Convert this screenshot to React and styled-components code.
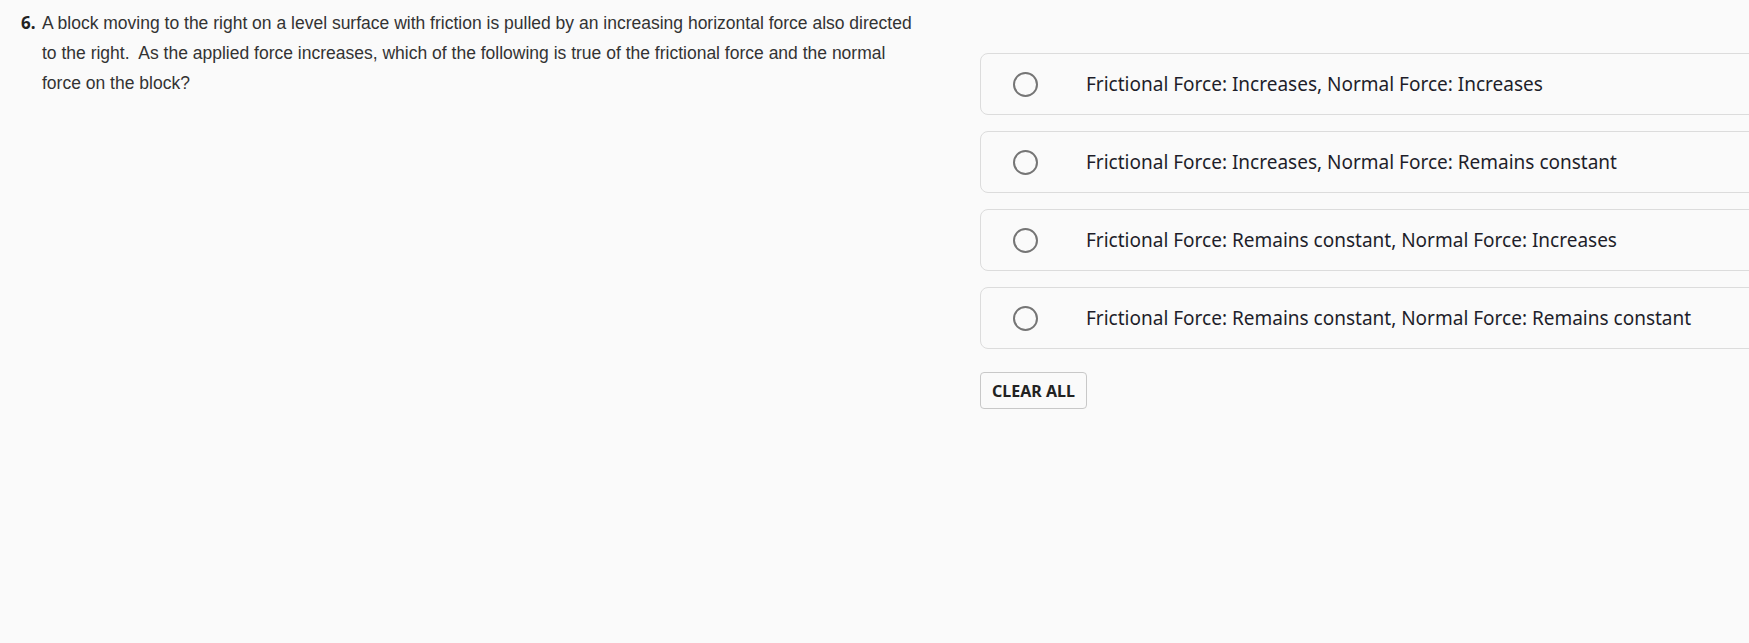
import React from "react";
import styled, { createGlobalStyle } from "styled-components";

const GlobalStyle = createGlobalStyle`
  html, body {
    margin: 0;
    padding: 0;
    background: #fafafa;
    overflow: hidden;
  }
`;

const options = [
  "Frictional Force: Increases, Normal Force: Increases",
  "Frictional Force: Increases, Normal Force: Remains constant",
  "Frictional Force: Remains constant, Normal Force: Increases",
  "Frictional Force: Remains constant, Normal Force: Remains constant",
];

const App = () => {
  return (
    <>
      <GlobalStyle />
      <Page>
        <Question>
          <Number>6.</Number>
          <Prompt>
            A block moving to the right on a level surface with friction is pulled by an
            increasing horizontal force also directed to the right.&nbsp; As the applied force
            increases, which of the following is true of the frictional force and the normal
            force on the block?
          </Prompt>
        </Question>
        <Answers>
          {options.map((text) => (
            <Choice key={text}>
              <Radio />
              <ChoiceText>{text}</ChoiceText>
            </Choice>
          ))}
          <ClearButton>CLEAR ALL</ClearButton>
        </Answers>
      </Page>
    </>
  );
};

const Page = styled.div`
  display: grid;
  grid-template-columns: 939px 840px;
  column-gap: 20px;
  padding: 8px 0 0 21px;
  width: 1900px;
  height: 643px;
  box-sizing: border-box;
  background: #fafafa;
`;

const Question = styled.div`
  display: flex;
  align-items: flex-start;
`;

const Number = styled.span`
  font-family: "Noto Sans", sans-serif;
  font-weight: 700;
  font-size: 17px;
  line-height: 30px;
  color: #222;
  width: 21px;
  flex: none;
`;

const Prompt = styled.p`
  margin: 0;
  width: 882px;
  font-family: "Liberation Sans", Arial, sans-serif;
  font-size: 17.5px;
  line-height: 30px;
  color: #333;
`;

const Answers = styled.div`
  display: flex;
  flex-direction: column;
  align-items: flex-start;
  padding-top: 45px;
`;

const Choice = styled.label`
  display: flex;
  align-items: center;
  width: 100%;
  height: 62px;
  box-sizing: border-box;
  margin-bottom: 16px;
  padding-left: 32px;
  border: 1px solid #dcdcdc;
  border-radius: 8px;
  background: #fafafa;
  cursor: pointer;
`;

const Radio = styled.span`
  width: 25px;
  height: 25px;
  box-sizing: border-box;
  border: 2.5px solid #757575;
  border-radius: 50%;
  flex: none;
`;

const ChoiceText = styled.span`
  margin-left: 48px;
  font-family: "Noto Sans", sans-serif;
  font-size: 19px;
  color: #1e1e2a;
`;

const ClearButton = styled.button`
  margin-top: 7px;
  height: 37px;
  padding: 0 11px;
  border: 1px solid #c8c8c8;
  border-radius: 4px;
  background: #fafafa;
  font-family: "Noto Sans", sans-serif;
  font-weight: 700;
  font-size: 16px;
  color: #222;
  cursor: pointer;
`;

export default App;
